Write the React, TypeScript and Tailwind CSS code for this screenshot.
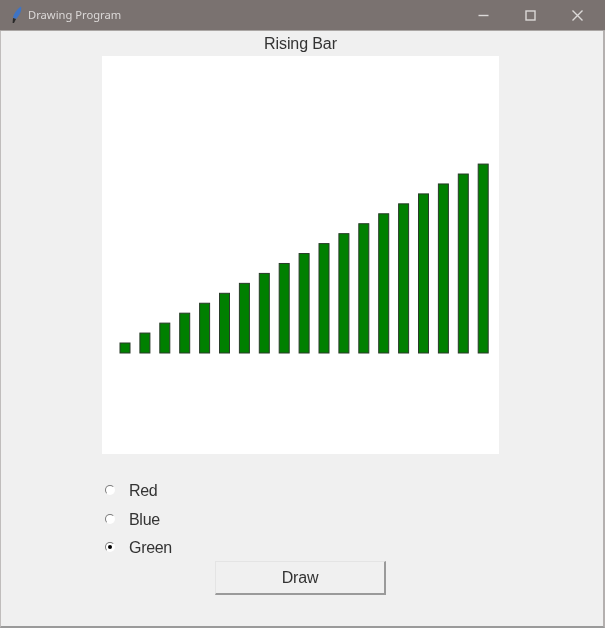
import React from 'react';

const bars = Array.from({ length: 19 }, (_, i) => i);

const RisingBarChart: React.FC = () => {
  return (
    <svg width="397" height="398" viewBox="0 0 397 398" className="block">
      {bars.map((i) => {
        const x = 18 + i * 19.9;
        const h = 10 + i * 9.94;
        return (
          <rect
            key={i}
            x={x}
            y={297 - h}
            width={10}
            height={h}
            fill="#008000"
            stroke="#2a3a2a"
            strokeWidth={1}
          />
        );
      })}
    </svg>
  );
};

const Radio: React.FC<{ label: string; checked?: boolean; rowClass: string }> = ({ label, checked, rowClass }) => {
  return (
    <div className={`flex items-center ${rowClass}`}>
      <span className="-mt-[2px] w-[10px] h-[10px] rounded-full bg-white border border-transparent border-t-[#7a7a7a] border-l-[#7a7a7a] flex items-center justify-center">
        {checked && <span className="w-[4px] h-[4px] rounded-full bg-black" />}
      </span>
      <span className="ml-[14px] text-[16px] tracking-[-0.3px] leading-none text-[#333333]">{label}</span>
    </div>
  );
};

export default function App() {
  return (
    <div className="w-[605px] h-[628px] bg-[#f0f0f0] flex flex-col font-['Liberation_Sans',Arial,sans-serif] border-b-2 border-[#9a9a9a] border-l border-l-[#c0bdbc] border-r-2 border-r-[#b4b0af] blur-[0.6px]">
      {/* Title bar */}
      <div className="h-[31px] -ml-px -mr-[2px] shrink-0 bg-[#7a7270] border-b border-[#aaa6a4] flex items-center text-[#dcd9d8]">
        <svg width="14" height="20" viewBox="0 0 14 20" className="ml-[9px]">
          <path d="M12 1.5 C13 5 11 10 7 14 L4 13 C4.5 9 8 4 12 1.5 Z" fill="#3f74c4" />
          <path d="M4 13 L7 14 L5 18 L3.6 18 Z" fill="#2a2a2a" />
        </svg>
        <span className="ml-[5px] text-[11.2px] font-['Noto_Sans',sans-serif]">Drawing Program</span>
        <div className="ml-auto flex items-center">
          {/* min / max / close glyphs */}
          <svg width="11" height="11" viewBox="0 0 11 11" className="mr-[36px]" stroke="currentColor" fill="none" strokeWidth="1.4">
            <path d="M0.5 5.5 H10.5" />
          </svg>
          <svg width="11" height="11" viewBox="0 0 11 11" className="mr-[36px]" stroke="currentColor" fill="none" strokeWidth="1.4">
            <rect x="1" y="1" width="9" height="9" />
          </svg>
          <svg width="11" height="11" viewBox="0 0 11 11" className="mr-[22px]" stroke="currentColor" fill="none" strokeWidth="1.4">
            <path d="M0.5 0.5 L10.5 10.5 M10.5 0.5 L0.5 10.5" />
          </svg>
        </div>
      </div>

      <div className="pl-[101px] flex flex-col">
        <div className="w-[397px] h-[25px] flex items-center justify-center text-[16px] tracking-[-0.1px] text-[#333333]">
          Rising Bar
        </div>
        <div className="w-[397px] h-[398px] bg-white">
          <RisingBarChart />
        </div>
        <div className="mt-[22px] pl-[3px] flex flex-col">
          <Radio label="Red" rowClass="h-[29px]" />
          <Radio label="Blue" rowClass="h-[29px]" />
          <Radio label="Green" rowClass="h-[28px]" checked />
        </div>
        <button className="ml-[113px] -mt-[1px] w-[171px] h-[34px] pt-[1px] bg-[#f0f0f0] border border-[#e4e4e4] border-r-2 border-b-2 border-r-[#9a9a9a] border-b-[#9a9a9a] text-[16px] tracking-[-0.2px] text-[#333333]">
          Draw
        </button>
      </div>
    </div>
  );
}
